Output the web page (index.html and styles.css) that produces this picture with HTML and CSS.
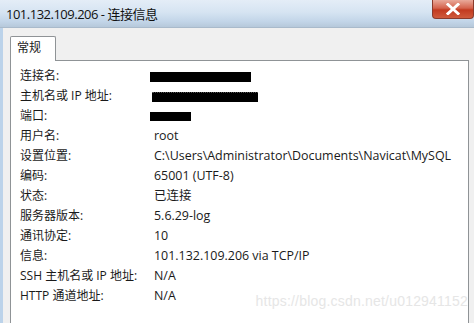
FILE: index.html
```html
<!DOCTYPE html>
<html lang="zh">
<head>
<meta charset="utf-8">
<title>连接信息</title>
<link rel="stylesheet" href="styles.css">
</head>
<body>
<div class="window">
  <div class="titlebar">
    <span class="title">101.132.109.206 - 连接信息</span>
    <span class="close"><svg width="16" height="12" viewBox="0 0 16 12"><path d="M3 1.5 L13 10.5 M13 1.5 L3 10.5" stroke="#fff" stroke-width="3" stroke-linecap="square"/></svg></span>
  </div>
  <div class="client">
    <div class="tabs"><span class="tab">常规</span></div>
    <div class="panel">
      <div class="grid">
        <span class="lbl">连接名:</span><span class="val"><i class="bar bar1"></i></span>
        <span class="lbl">主机名或 IP 地址:</span><span class="val"><i class="bar bar2"></i></span>
        <span class="lbl">端口:</span><span class="val"><i class="bar bar3"></i></span>
        <span class="lbl">用户名:</span><span class="val">root</span>
        <span class="lbl">设置位置:</span><span class="val">C:\Users\Administrator\Documents\Navicat\MySQL</span>
        <span class="lbl">编码:</span><span class="val">65001 (UTF-8)</span>
        <span class="lbl">状态:</span><span class="val">已连接</span>
        <span class="lbl">服务器版本:</span><span class="val">5.6.29-log</span>
        <span class="lbl">通讯协定:</span><span class="val">10</span>
        <span class="lbl">信息:</span><span class="val">101.132.109.206 via TCP/IP</span>
        <span class="lbl">SSH 主机名或 IP 地址:</span><span class="val">N/A</span>
        <span class="lbl">HTTP 通道地址:</span><span class="val">N/A</span>
      </div>
      <span class="watermark">https://blog.csdn.net/u012941152</span>
    </div>
  </div>
</div>
</body>
</html>
```

FILE: styles.css
```css
html, body {
  margin: 0;
  padding: 0;
}
body {
  width: 474px;
  height: 323px;
  overflow: hidden;
  font-family: "Open Sans", "Noto Sans CJK SC", sans-serif;
  color: #1a1a1a;
}
.window {
  height: 323px;
  display: flex;
  flex-direction: column;
  background: #f0f0f0;
  border-left: 3px solid #bcd3ea;
  box-sizing: border-box;
}
.titlebar {
  height: 28px;
  flex: none;
  display: flex;
  align-items: flex-start;
  background: linear-gradient(180deg, #e4edf7 0%, #d6e4f2 45%, #c2d5e8 80%, #b6c8da 100%);
  border-bottom: 1px solid #a9bacb;
  margin-left: -3px;
  padding-left: 6px;
  box-sizing: border-box;
}
.title {
  font-size: 13px;
  line-height: 16px;
  margin-top: 6px;
  color: #111;
  letter-spacing: -0.5px;
}
.close {
  margin-left: auto;
  width: 42px;
  height: 19px;
  display: flex;
  align-items: center;
  justify-content: center;
  background: linear-gradient(180deg, #e9a99a 0%, #d4634d 45%, #c23a20 55%, #cf5a3c 100%);
  border: 1px solid #8a3a2c;
  border-top: none;
  border-radius: 0 0 4px 4px;
  box-sizing: border-box;
}
.client {
  flex: 1;
  display: flex;
  flex-direction: column;
  padding: 8px 5px 0 7px;
  min-height: 0;
}
.tabs {
  display: flex;
  height: 24px;
  flex: none;
  position: relative;
  z-index: 1;
}
.tab {
  width: 46px;
  height: 25px;
  box-sizing: border-box;
  border: 1px solid #8f9396;
  border-bottom: none;
  background: #fff;
  font-size: 12px;
  line-height: 22px;
  padding-left: 6px;
  border-radius: 2px 2px 0 0;
}
.panel {
  flex: 1;
  position: relative;
  background: #fff;
  border: 1px solid #8f9396;
  border-bottom: none;
  padding: 5px 0 0 9px;
}
.grid {
  display: grid;
  grid-template-columns: 134px 1fr;
  grid-auto-rows: 20px;
  align-items: center;
  font-size: 12px;
}
.lbl, .val {
  white-space: nowrap;
  line-height: 20px;
}
.val {
  font-size: 12.45px;
}
.bar {
  display: inline-block;
  background: #000;
  vertical-align: middle;
}
.bar1 {
  width: 101px;
  height: 10px;
  margin-left: -4px;
}
.bar2 {
  width: 106px;
  height: 9px;
  margin-left: -2px;
  border-top: 1px dotted #555;
}
.bar3 {
  width: 41px;
  height: 9px;
  margin-left: -4px;
}
.watermark {
  position: absolute;
  right: 0;
  bottom: 14px;
  font-family: "Liberation Sans", sans-serif;
  font-size: 14px;
  color: #e6e6e6;
  letter-spacing: 0.2px;
}
```
